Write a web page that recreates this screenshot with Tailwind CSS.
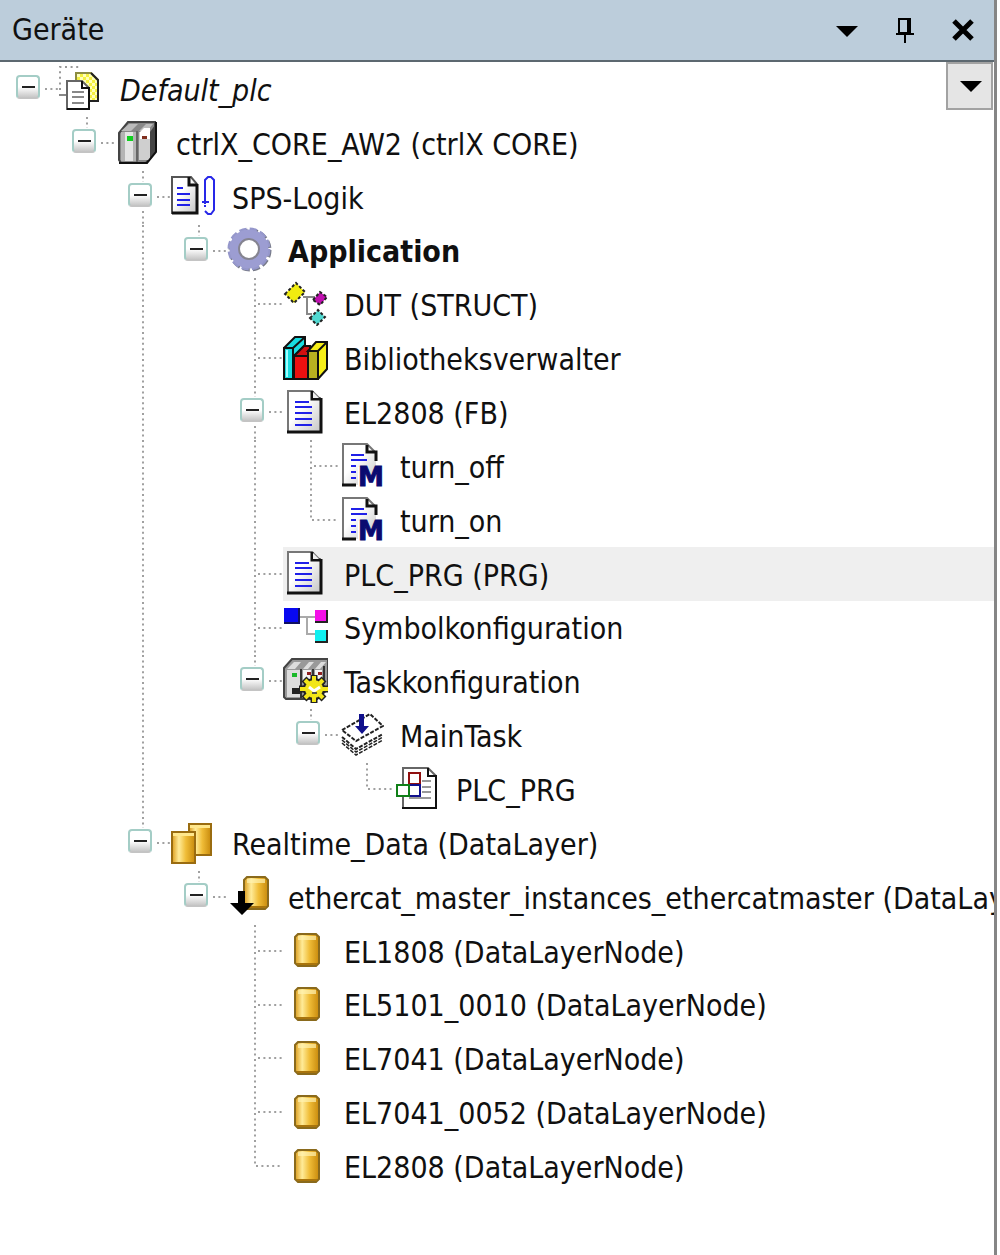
<!DOCTYPE html>
<html lang="de">
<head>
<meta charset="utf-8">
<title>Geräte</title>
<script src="https://cdn.jsdelivr.net/npm/@tailwindcss/browser@4"></script>
</head>
<body class="bg-white">
<svg class="absolute size-0" aria-hidden="true">
  <defs>
    <linearGradient id="gold" x1="0" x2="1"><stop offset="0" stop-color="#dc9c1c"/><stop offset=".3" stop-color="#ffeb98"/><stop offset=".6" stop-color="#f0bd38"/><stop offset="1" stop-color="#c88a0c"/></linearGradient>
    <linearGradient id="paper" x1="0" y1="0" x2="1" y2="1"><stop offset=".4" stop-color="#fff"/><stop offset="1" stop-color="#c4c4c4"/></linearGradient>
    <pattern id="dither" width="6" height="6" patternUnits="userSpaceOnUse"><path fill="#ffffb8" d="M0 0h6v6H0z"/><path fill="#f4f040" d="M0 0h3v3H0zM3 3h3v3H3z"/></pattern>
    <g id="cyl"><path d="M3 1h18l3 3v26l-3 3H3l-3-3V4z" fill="url(#gold)" stroke="#8a6a1c" stroke-width="2"/><path d="M3 3h18v4H3z" fill="#fff2b0" opacity=".7"/><path d="M2 31h20" stroke="#a8740c" stroke-width="2"/></g>
  </defs>
  <symbol id="i-project" viewBox="0 0 45 45">
    <path d="M1 25V2H20" fill="none" stroke="#999" stroke-width="2" stroke-dasharray="2 3.6"/>
    <path d="M17 8h15l7 7v21H17z" fill="url(#dither)" stroke="#8c8c40" stroke-width="2"/><path d="M32 8l7 7v21h-8" fill="none" stroke="#222" stroke-width="2"/>
    <path d="M0 30h7" stroke="#888" stroke-width="2"/>
    <path d="M8 16h15l7 7v21H8z" fill="#fff" stroke="#666" stroke-width="2"/><path d="M23 16v7h7v21H8" fill="none" stroke="#111" stroke-width="2"/>
    <path d="M13 27h12M13 32h12M13 38h12" stroke="#888" stroke-width="2"/>
  </symbol>
  <symbol id="i-device" viewBox="0 0 45 45">
    <path d="M4 14L13 3h27v30l-9 11H6l-2-3z" fill="#888" stroke="#444" stroke-width="2"/>
    <path d="M35 13l5-7v27l-5 8z" fill="#444"/><path d="M6 12l8-7h9l-7 7zM24 12l7-7h7l-6 7z" fill="#bbb"/>
    <path d="M6 13h15v29H6z" fill="#e4e4e4"/><path d="M6 13h4v29H6zM18 13h3v29h-3z" fill="#b4b4b4"/><path d="M24 13h11v28H24z" fill="#cfcfcf"/><path d="M25 13l4-4h6v11H25z" fill="#fff"/>
    <path d="M22 12v31" stroke="#666" stroke-width="2"/><path d="M12 17h6v5h-6z" fill="#10d020"/><path d="M27 17h5v3h-5z" fill="#803020"/><path d="M4 44h28l9-11V3" fill="none" stroke="#111" stroke-width="2"/>
  </symbol>
  <symbol id="i-logic" viewBox="0 0 45 45">
    <path d="M1 4h19l6 7v29H1z" fill="url(#paper)" stroke="#555" stroke-width="2"/><path d="M18 4v8h8M26 11v29H1" fill="none" stroke="#111" stroke-width="3"/>
    <path d="M6 15h6M6 21h13M6 27h13M6 32h13" stroke="#2020e8" stroke-width="2"/>
    <path d="M34 31V7l3-3h3l3 3v30l-3 4h-3l-3-3M31 29h7M34 32v2" fill="none" stroke="#2828e8" stroke-width="2"/>
  </symbol>
  <symbol id="i-app" viewBox="0 0 45 45">
    <circle cx="23" cy="23" r="18.500" fill="none" stroke="#777a88" stroke-width="6" stroke-dasharray="6.7 3"/>
    <circle cx="22" cy="22" r="18.500" fill="none" stroke="#9597cb" stroke-width="6" stroke-dasharray="6.7 3"/>
    <circle cx="22" cy="22" r="14" fill="none" stroke="#9c9dd2" stroke-width="11"/><circle cx="22" cy="22" r="10" fill="#fff" stroke="#858490" stroke-width="2"/>
  </symbol>
  <symbol id="i-struct" viewBox="0 0 45 45">
    <path d="M20 16h12M24 16v17h5" fill="none" stroke="#888" stroke-width="2"/>
    <g stroke="#222" stroke-width="2" stroke-dasharray="3 2"><path d="M2 13L13 2l9 9-11 11z" fill="#f0ec10"/><path d="M30 19l7-8 7 5-7 8z" fill="#c010b0"/><path d="M27 37l8-8 7 7-8 8z" fill="#50d8d0"/></g>
  </symbol>
  <symbol id="i-library" viewBox="0 0 45 45">
    <g stroke="#111" stroke-width="2"><path d="M1 13L12 2h10v8l-8 8-4 4v22H1z" fill="#18dce0"/><path d="M1 13h9v9M10 13L22 2" fill="none"/><path d="M11 21l10-10h6v10l-3 5z" fill="#d01010"/><path d="M11 21h14v23H11z" fill="#ee1010"/><path d="M25 16l8-9h11v27l-9 10V16z" fill="#f6ee18"/><path d="M25 16h10v28H25z" fill="#b8b020"/><path d="M1 13h9v31H1z" fill="#18dce0"/><path d="M35 16l9-9" fill="none"/></g>
    <path d="M4 15v27" stroke="#a0ffff" stroke-width="2"/>
  </symbol>
  <symbol id="i-doc" viewBox="0 0 45 45">
    <path d="M5 2h24l9 9v32H5z" fill="url(#paper)" stroke="#777" stroke-width="2"/><path d="M29 2v8h9M38 9v34H4" fill="none" stroke="#111" stroke-width="3"/><path d="M30 3l6 6h-6z" fill="#eee"/>
    <path d="M12 13h14M12 18h17M12 24h17M12 30h17M12 36h17" stroke="#2020e8" stroke-width="2"/>
  </symbol>
  <symbol id="i-method" viewBox="0 0 45 45">
    <path d="M4 2h24l9 9v14l-6 8-7-8h-5v18H4z" fill="url(#paper)"/><path d="M4 44V2h24l8 8" fill="none" stroke="#777" stroke-width="2"/><path d="M28 3v7h9v9M3 43h14" fill="none" stroke="#111" stroke-width="3"/>
    <path d="M12 13h13M12 18h16M12 24h5M12 30h5M12 36h5" stroke="#2020e8" stroke-width="2"/>
  </symbol>
  <symbol id="i-symbols" viewBox="0 0 45 45">
    <path d="M16 13h16M24 13v17h8" fill="none" stroke="#aaa" stroke-width="2"/>
    <path d="M1 4h16v16H1z" fill="#101060"/><path d="M1 4h14v14H1z" fill="#0808f0"/><path d="M32 6h13v13H32zM32 26h13v13H32z" fill="#222"/><path d="M32 6h11v11H32z" fill="#f410e8"/><path d="M32 26h11v11H32z" fill="#10f0f0"/>
  </symbol>
  <symbol id="i-tasks" viewBox="0 0 45 45">
    <path d="M1 10l8-9h36v30L34 41H3l-2-2z" fill="#999" stroke="#444" stroke-width="2"/><path d="M4 11l7-7h7l-6 7zM20 11l6-7h5l-6 7zM32 11l6-7h5l-6 7z" fill="#ddd"/><path d="M4 12h13v27H4z" fill="#ddd"/><path d="M20 12h8v12h-8zM32 12h7v10h-7z" fill="#f4f4f4"/><path d="M18 11v29M30 11v12M41 8v18" stroke="#333" stroke-width="2"/><path d="M9 15h5v4H9z" fill="#18b828"/><path d="M24 14h4v3h-4zM35 14h4v3h-4z" fill="#902020"/><path d="M9 30h8v6H9z" fill="#222"/>
    <path d="M31 17v28M16 31h29M21 21l20 20M41 21L21 41" stroke="#222" stroke-width="7"/><circle cx="31" cy="31" r="11" fill="#222"/>
    <path d="M31 18v26M17 31h28M22 22l18 18M40 22L22 40" stroke="#f2e618" stroke-width="4"/><circle cx="31" cy="31" r="9" fill="#f2e618"/><path d="M26 29l5 4 6-4" fill="none" stroke="#fff" stroke-width="3"/><path d="M29 35h5" stroke="#554" stroke-width="2"/>
  </symbol>
  <symbol id="i-task" viewBox="0 0 45 45">
    <g fill="none" stroke="#222" stroke-width="2" stroke-dasharray="4 1.500"><path d="M3 18L31 2l13 12-27 15z"/><path d="M3 25l14 12 27-15"/><path d="M3 31l14 12 27-15M3 28l14 12 27-15" stroke-width="1.500"/></g>
    <path d="M20 2h5v12h5l-7 8-7-8h4z" fill="#10108c"/>
  </symbol>
  <symbol id="i-call" viewBox="0 0 45 45">
    <path d="M8 2h25l8 8v32H8z" fill="#fff" stroke="#666" stroke-width="2"/><path d="M33 2v8h8M41 9v33H7" fill="none" stroke="#111" stroke-width="2"/><path d="M27 15h9M27 21h9M27 26h9M14 32h22" stroke="#999" stroke-width="2"/>
    <g fill="#fff" stroke-width="2"><path d="M14 7h11v11H14z" stroke="#901010"/><path d="M14 19h11v11H14z" stroke="#10108c"/><path d="M2 19h12v11H2z" stroke="#108018"/></g>
  </symbol>
  <symbol id="i-layer" viewBox="0 0 45 45">
    <path d="M18 5h22v31H18z" fill="url(#gold)" stroke="#9a6c10" stroke-width="2"/><path d="M1 13h23v31H1z" fill="url(#gold)" stroke="#9a6c10" stroke-width="2"/><path d="M19 6h20v3H19zM2 14h21v3H2z" fill="#ffe78c"/>
  </symbol>
  <symbol id="i-master" viewBox="0 0 45 45"><use href="#cyl" x="17" y="3"/><path d="M11 18h7v12h9L15 42 3 30h8z" fill="#000"/></symbol>
  <symbol id="i-node" viewBox="0 0 45 45"><use href="#cyl" x="12" y="6"/></symbol>
</svg>

<main class="mr-[3px] flex min-h-screen flex-col border-r-[3px] border-[#858585]">
  <header class="flex h-[62px] shrink-0 items-center border-b-2 border-[#5c6870] bg-[#bccddb] pr-[10px] pl-3">
    <h1 class="grow font-['DejaVu_Sans_Condensed','DejaVu_Sans',sans-serif] text-[30px] leading-8 text-[#101010]">Geräte</h1>
    <div class="flex gap-4">
      <button aria-label="Menü" class="flex size-[42px] items-center justify-center"><svg width="24" height="26"><path d="M1 9h22L12 20z"/></svg></button>
      <button aria-label="Anheften" class="flex size-[42px] items-center justify-center"><svg width="20" height="26"><path d="M4 2h11v14H4zM1 17h18M10 17v9" fill="none" stroke="#000" stroke-width="2"/><path d="M12 1h4v15h-4z"/></svg></button>
      <button aria-label="Schließen" class="flex size-[42px] items-center justify-center"><svg width="24" height="24"><path d="M3 3l18 18M21 3L3 21" stroke="#000" stroke-width="5"/></svg></button>
    </div>
  </header>
  <div class="relative grow">
    <button aria-label="Gerät auswählen" class="absolute top-0 right-[1px] flex h-12 w-[47px] items-center justify-center border-2 border-[#a2a2a2] bg-[#e5e5e5]"><svg width="24" height="12"><path d="M2 1h22L13 12z"/></svg></button>
    <ul id="tree" role="tree" aria-label="Geräte" class="grid h-[1131px] auto-rows-fr overflow-hidden font-['DejaVu_Sans_Condensed','DejaVu_Sans',sans-serif] text-[30px] leading-8 text-[#101010]"></ul>
  </div>
</main>
<script>
  // guides: one character per column; "|" passing line, " " blank.
  // node: "r" root, "o" open with siblings below, "e" open and last, "t" leaf, "l" last leaf
  const rows = [
    ['', 'r', 'project', 'Default_plc', 'italic'],
    [' ', 'e', 'device', 'ctrlX_CORE_AW2 (ctrlX CORE)'],
    ['  ', 'o', 'logic', 'SPS-Logik'],
    ['  |', 'e', 'app', 'Application', 'font-bold'],
    ['  | ', 't', 'struct', 'DUT (STRUCT)'],
    ['  | ', 't', 'library', 'Bibliotheksverwalter'],
    ['  | ', 'o', 'doc', 'EL2808 (FB)'],
    ['  | |', 't', 'method', 'turn_off'],
    ['  | |', 'l', 'method', 'turn_on'],
    ['  | ', 't', 'doc', 'PLC_PRG (PRG)', 'bg-[#efefef]'],
    ['  | ', 't', 'symbols', 'Symbolkonfiguration'],
    ['  | ', 'e', 'tasks', 'Taskkonfiguration'],
    ['  |  ', 'e', 'task', 'MainTask'],
    ['  |   ', 'l', 'call', 'PLC_PRG'],
    ['  ', 'e', 'layer', 'Realtime_Data (DataLayer)'],
    ['   ', 'e', 'master', 'ethercat_master_instances_ethercatmaster (DataLayer)'],
    ['    ', 't', 'node', 'EL1808 (DataLayerNode)'],
    ['    ', 't', 'node', 'EL5101_0010 (DataLayerNode)'],
    ['    ', 't', 'node', 'EL7041 (DataLayerNode)'],
    ['    ', 't', 'node', 'EL7041_0052 (DataLayerNode)'],
    ['    ', 'l', 'node', 'EL2808 (DataLayerNode)']
  ];
  const lines = {
    ' ': '', '|': 'M28 1V54', r: 'M42 27H56', e: 'M28 1V12M42 27H56',
    o: 'M28 1V12M28 41V54M42 27H56', t: 'M28 1V54M31 27H56', l: 'M28 1V27H56'
  };
  const cell = k => `<svg width="56" height="54" class="shrink-0" aria-hidden="true"><path d="${lines[k]}" fill="none" stroke="#a0a0a0" stroke-width="2" stroke-dasharray="2 3.4"/></svg>`;
  const toggle = `<button aria-label="Zuklappen" class="absolute top-[13px] left-[13px] flex h-6 w-6 items-center justify-center rounded-sm border-2 border-[#a4cdc6] border-b-[#c4c4c4] bg-linear-to-b from-white from-50% to-[#c8c8c8]"><span class="h-[2px] w-[13px] bg-[#222]"></span></button>`;
  const badge = `<text x="32" y="44" text-anchor="middle" font-family="DejaVu Sans, sans-serif" font-weight="700" font-size="26" fill="#0a0a70" stroke="#0a0a70">M</text>`;
  document.getElementById('tree').innerHTML = rows.map(([g, k, icon, text, style = '']) => `
    <li role="treeitem" aria-level="${g.length + 1}" class="flex overflow-hidden pl-[3px] whitespace-nowrap">
      ${[...g].map(cell).join('')}
      <div class="relative shrink-0">${cell(k)}${'reo'.includes(k) ? toggle : ''}</div>
      <div class="flex grow items-center gap-4 ${style}"><svg width="45" height="45" class="mb-[2px] shrink-0" aria-hidden="true"><use href="#i-${icon}"/>${icon === 'method' ? badge : ''}</svg><span class="mt-[4px]">${text}</span></div>
    </li>`).join('');
</script>
</body>
</html>
